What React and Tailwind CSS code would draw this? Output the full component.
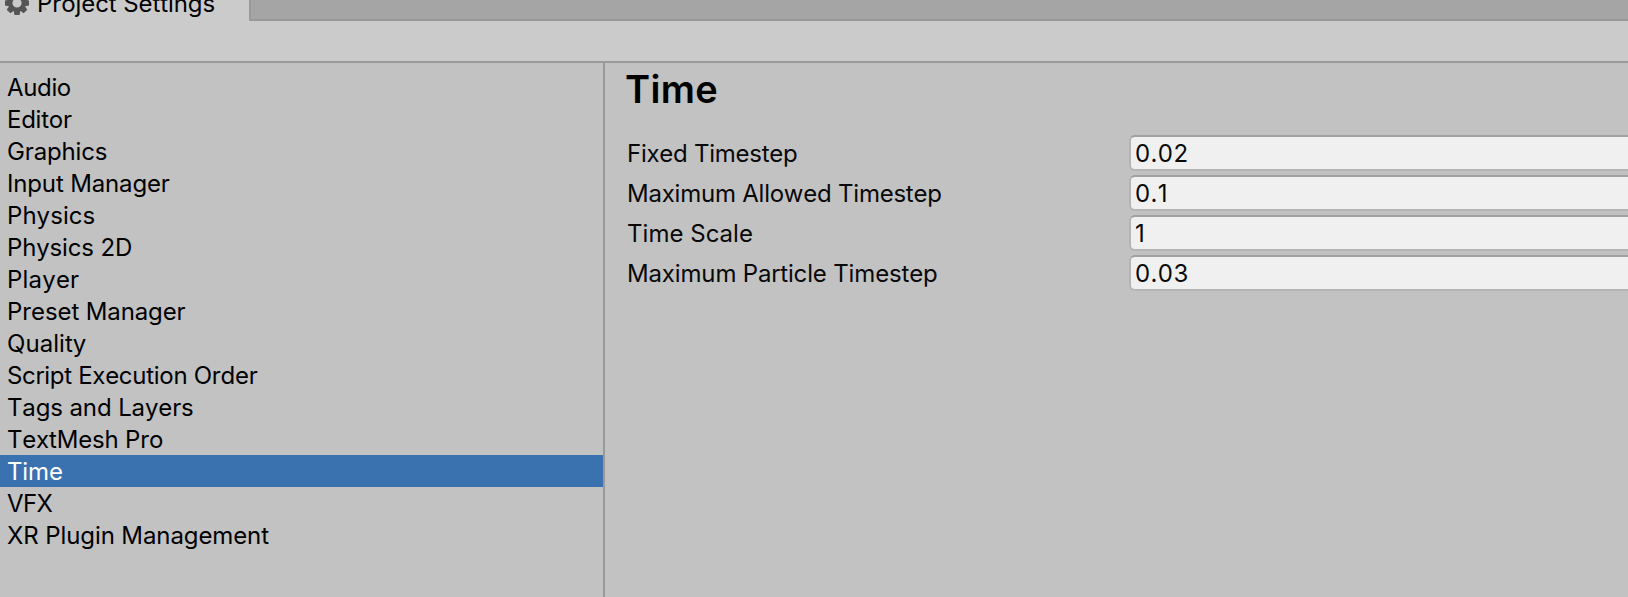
import React from 'react';

const SECTIONS = [
  { name: 'Audio', tracking: 'tracking-[-0.35px]' },
  { name: 'Editor', tracking: 'tracking-[-0.25px]' },
  { name: 'Graphics', tracking: 'tracking-[-0.15px]' },
  { name: 'Input Manager', tracking: 'tracking-[-0.15px]' },
  { name: 'Physics', tracking: 'tracking-[0.05px]' },
  { name: 'Physics 2D', tracking: 'tracking-[-0.15px]' },
  { name: 'Player', tracking: 'tracking-[0.2px]' },
  { name: 'Preset Manager', tracking: 'tracking-[-0.12px]' },
  { name: 'Quality', tracking: 'tracking-[0.05px]' },
  { name: 'Script Execution Order', tracking: 'tracking-[-0.29px]' },
  { name: 'Tags and Layers', tracking: 'tracking-[-0.12px]' },
  { name: 'TextMesh Pro', tracking: 'tracking-[-0.18px]' },
  { name: 'Time', tracking: 'tracking-[-0.15px]' },
  { name: 'VFX', tracking: 'tracking-[-0.6px]' },
  { name: 'XR Plugin Management', tracking: 'tracking-[-0.1px]' },
];

const FIELDS = [
  { label: 'Fixed Timestep', value: '0.02', tracking: 'tracking-[-0.25px]' },
  { label: 'Maximum Allowed Timestep', value: '0.1', tracking: 'tracking-[-0.23px]' },
  { label: 'Time Scale', value: '1', tracking: 'tracking-[0.05px]' },
  { label: 'Maximum Particle Timestep', value: '0.03', tracking: 'tracking-[-0.15px]' },
];

const GearIcon = () => (
  <svg viewBox="-12 -12 24 24" className="w-6 h-6 shrink-0" fill="#555555">
    {[0, 45, 90, 135, 180, 225, 270, 315].map((a) => (
      <path key={a} d="M-3.4 -7 L-2.6 -12 H2.6 L3.4 -7 Z" transform={`rotate(${a})`} />
    ))}
    <circle r="6.8" fill="none" stroke="#555555" strokeWidth="4.4" />
  </svg>
);

// Tab strip + empty toolbar
const Header = () => (
  <header>
    <div className="flex h-[21px] bg-[#a5a5a5]">
      <div className="flex w-[249px] items-end gap-[8px] bg-[#cbcbcb] pl-[5px]">
        <div className="mb-[6px]"><GearIcon /></div>
        <span className="mb-[3px] leading-[28px] tracking-[-0.08px]">Project Settings</span>
      </div>
      <div className="flex-1 border-b-2 border-l-2 border-[#999999]" />
    </div>
    <div className="h-[42px] border-b-2 border-[#999999] bg-[#cbcbcb]" />
  </header>
);

const Sidebar = ({ selected, onSelect }) => (
  <nav className="w-[605px] shrink-0 border-r-2 border-[#999999] pt-2">
    {SECTIONS.map(({ name, tracking }) => (
      <button
        key={name}
        onClick={() => onSelect(name)}
        className={`block h-8 w-full pl-[7px] text-left leading-[34px] ${tracking} ${name === selected ? 'bg-[#3a72b0] text-white' : ''}`}
      >
        {name}
      </button>
    ))}
  </nav>
);

const Field = ({ label, value, tracking }) => (
  <label className="flex h-9 items-center">
    <span className={`w-[502px] shrink-0 pt-[2px] text-[#090909] ${tracking}`}>{label}</span>
    <input
      defaultValue={value}
      className="h-9 w-[520px] shrink-0 rounded-[6px] border-2 border-[#b5b5b5] border-t-[#a0a0a0] bg-[#f0f0f0] px-[4px] pt-[2px] tracking-[0.4px] text-[#090909] outline-none"
    />
  </label>
);

export default function App() {
  const [selected, setSelected] = React.useState('Time');

  return (
    <div className="flex h-screen flex-col overflow-hidden bg-[#c2c2c2] font-[Inter,sans-serif] text-[24px] text-black [font-kerning:none]">
      <Header />
      <div className="flex min-h-0 flex-1">
        <Sidebar selected={selected} onSelect={setSelected} />
        <main className="flex-1 overflow-hidden pl-[22px] pt-1">
          <h1 className="-ml-[2px] h-[68px] text-[38px] font-semibold leading-[44px] tracking-[0.3px]">{selected}</h1>
          <div className="flex flex-col gap-1">
            {FIELDS.map((f) => (
              <Field key={f.label} {...f} />
            ))}
          </div>
        </main>
      </div>
    </div>
  );
}
